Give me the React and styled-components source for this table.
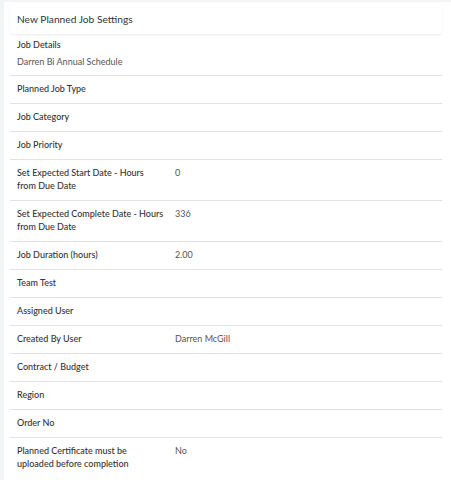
import React from 'react'
import styled, { createGlobalStyle } from 'styled-components'

const GlobalStyle = createGlobalStyle`
  html, body {
    margin: 0;
    padding: 0;
    background: #f3f4f6;
    font-family: Lato, "Open Sans", sans-serif;
  }
`

const Panel = styled.div`
  margin: 2px 0 0 4px;
  padding: 1px 9px 0 6px;
  background: #fff;
  min-height: 478px;
  box-sizing: border-box;
`

const Header = styled.div`
  height: 31px;
  display: flex;
  align-items: center;
  padding: 0 7px;
  background: #fff;
  border-radius: 3px;
  box-shadow: 0 1px 2px rgba(0, 0, 0, 0.08);
  font-size: 10.2px;
  color: #333;
`

const Row = styled.div`
  display: ${p => (p.stacked ? 'block' : 'flex')};
  padding: ${p => (p.stacked ? '4px 7px 7px' : '6px 7px 8px')};
  border-top: ${p => (p.first ? 'none' : '1px solid #e3e3e3')};
  font-size: 9px;
  line-height: 13px;
`

const Label = styled.div`
  width: 158px;
  flex-shrink: 0;
  padding-right: 4px;
  box-sizing: border-box;
  color: #333;
  font-weight: 500;
  white-space: pre-line;
`

const Value = styled.div`
  color: #555;
  padding-top: ${p => (p.stacked ? '3.5px' : '0')};
`

const rows = [
  { label: 'Planned Job Type' },
  { label: 'Job Category' },
  { label: 'Job Priority' },
  { label: 'Set Expected Start Date - Hours\nfrom Due Date', value: '0' },
  { label: 'Set Expected Complete Date - Hours\nfrom Due Date', value: '336' },
  { label: 'Job Duration (hours)', value: '2.00' },
  { label: 'Team Test' },
  { label: 'Assigned User' },
  { label: 'Created By User', value: 'Darren McGill' },
  { label: 'Contract / Budget' },
  { label: 'Region' },
  { label: 'Order No' },
  { label: 'Planned Certificate must be\nuploaded before completion', value: 'No' },
]

export default function App() {
  return (
    <>
      <GlobalStyle />
      <Panel>
        <Header>New Planned Job Settings</Header>
        <Row stacked first>
          <Label>Job Details</Label>
          <Value stacked>Darren Bi Annual Schedule</Value>
        </Row>
        {rows.map(r => (
          <Row key={r.label}>
            <Label>{r.label}</Label>
            {r.value && <Value>{r.value}</Value>}
          </Row>
        ))}
      </Panel>
    </>
  )
}
